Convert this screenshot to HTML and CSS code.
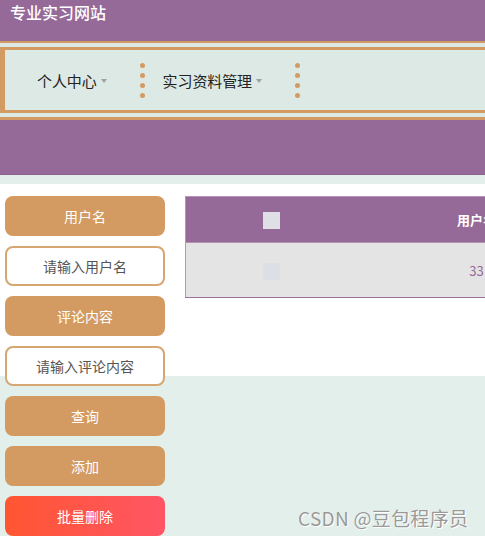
FILE: index.html
```html
<!DOCTYPE html>
<html lang="zh-CN">
<head>
<meta charset="utf-8">
<title>专业实习网站</title>
<link rel="stylesheet" href="styles.css">
</head>
<body>
<header class="top">专业实习网站</header>
<div class="navwrap">
  <nav class="nav">
    <div class="nav-item">个人中心<span class="caret"></span></div>
    <div class="sep"><i></i><i></i><i></i><i></i></div>
    <div class="nav-item">实习资料管理<span class="caret"></span></div>
    <div class="sep"><i></i><i></i><i></i><i></i></div>
  </nav>
</div>
<div class="band"></div>
<main class="main">
  <div class="panel"></div>
  <div class="content">
    <aside class="side">
      <div class="btn">用户名</div>
      <div class="inp">请输入用户名</div>
      <div class="btn">评论内容</div>
      <div class="inp">请输入评论内容</div>
      <div class="btn">查询</div>
      <div class="btn">添加</div>
      <div class="btn danger">批量删除</div>
    </aside>
    <table class="tbl">
      <thead>
        <tr><th class="c1"><span class="chk"></span></th><th class="c2">用户名</th></tr>
      </thead>
      <tbody>
        <tr><td class="c1"><span class="chk faint"></span></td><td class="c2">33</td></tr>
      </tbody>
    </table>
  </div>
</main>
<div class="wm">CSDN @豆包程序员</div>
</body>
</html>
```
FILE: styles.css
```css
html, body {
  margin: 0;
  padding: 0;
}
body {
  width: 485px;
  height: 536px;
  overflow: hidden;
  background: #e2efeb;
  font-family: "Noto Sans CJK SC", "Noto Sans", sans-serif;
  position: relative;
}
.top {
  height: 39px;
  padding-top: 2px;
  background: #966a98;
  border-bottom: 2px solid #d39b62;
  color: #fff;
  font-size: 16px;
  font-weight: 500;
  line-height: 20px;
  padding-left: 10px;
  box-sizing: content-box;
}
.navwrap {
  background: #dde9e4;
  padding: 4px 0;
  border-bottom: 3px solid #d39b62;
}
.nav {
  height: 60px;
  border-top: 3px solid #d39b62;
  border-bottom: 3px solid #d39b62;
  border-left: 5px solid #d39b62;
  background: #dde9e4;
  display: flex;
  align-items: center;
  padding-left: 32px;
}
.nav-item {
  display: flex;
  align-items: center;
  font-size: 15px;
  color: #222;
  letter-spacing: -0.1px;
}
.caret {
  width: 0;
  height: 0;
  border-left: 3.5px solid transparent;
  border-right: 3.5px solid transparent;
  border-top: 4px solid #a0a0a0;
  margin-left: 4px;
  margin-top: 1px;
}
.sep {
  display: flex;
  flex-direction: column;
  gap: 5px;
  margin: 0 18px 0 33px;
}
.sep i {
  display: block;
  width: 5px;
  height: 5px;
  border-radius: 50%;
  background: #d39b62;
}
.band {
  height: 54px;
  background: #966a98;
  border-bottom: 1px solid #8b6190;
}
.main {
  display: grid;
  padding-top: 9px;
}
.panel {
  grid-area: 1 / 1;
  align-self: start;
  height: 192px;
  background: #fff;
}
.content {
  grid-area: 1 / 1;
  display: flex;
  align-items: flex-start;
  padding: 12px 0 0 5px;
  gap: 20px;
}
.side {
  width: 160px;
  flex: none;
  display: flex;
  flex-direction: column;
  gap: 10px;
}
.btn, .inp {
  height: 40px;
  border-radius: 8px;
  display: flex;
  align-items: center;
  justify-content: center;
  font-size: 14px;
  box-sizing: border-box;
}
.btn {
  background: #d39b62;
  color: #fff;
}
.inp {
  background: #fff;
  border: 2px solid #d6a772;
  color: #555;
}
.btn.danger {
  background: linear-gradient(90deg, #ff5631, #ff5566);
}
.tbl {
  flex: none;
  border-collapse: collapse;
  border: 1px solid #b893b9;
  border-bottom-color: #9a729c;
  font-size: 13px;
}
.tbl th {
  height: 45px;
  background: #966a98;
  color: #fff;
  font-weight: bold;
  padding: 0;
  border-bottom: 1px solid #b48fb6;
}
.tbl td {
  height: 54px;
  background: #e4e4e4;
  color: #966a98;
  padding: 0;
  text-align: center;
}
.c1 { width: 171px; text-align: center; }
.c2 { width: 239px; text-align: center; }
.chk {
  display: inline-block;
  width: 17px;
  height: 17px;
  background: #dfe0e6;
  vertical-align: middle;
}
.chk.faint {
  background: #dce0e6;
}
.wm {
  position: absolute;
  left: 298px;
  top: 504px;
  font-family: "Noto Sans CJK SC", "DejaVu Sans", sans-serif;
  font-size: 19px;
  letter-spacing: 0.3px;
  color: #999;
  text-shadow: 0 0 1px #fff, 1px 1px 0 #fff;
  white-space: nowrap;
}
```
